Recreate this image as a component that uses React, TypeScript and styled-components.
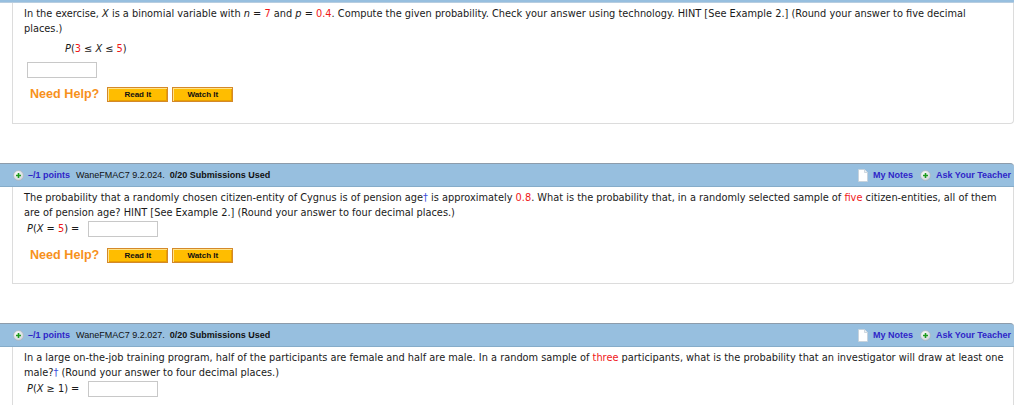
import React from 'react';
import styled, { createGlobalStyle } from 'styled-components';

const Global = createGlobalStyle`
  html, body { margin: 0; padding: 0; background: #ffffff; }
  body {
    width: 1024px; height: 405px; overflow: hidden;
    font-family: "DejaVu Sans", Verdana, sans-serif;
    color: #1a1a1a;
  }
`;

const Page = styled.div`
  width: 1014px;
  display: flex;
  flex-direction: column;
`;

const HeaderTail = styled.div`
  height: 2px;
  background: #97bfdf;
  border-bottom: 1px solid #b7cde0;
`;

const Question = styled.section<{ $first?: boolean }>`
  display: flex;
  flex-direction: column;
  margin-top: ${p => (p.$first ? '0' : '39px')};
`;

const Header = styled.div`
  height: 22px;
  border-top: 1px solid #8d9cab;
  border-bottom: 1px solid #86acc9;
  border-top-right-radius: 4px;
  background: #97bfdf;
  display: flex;
  align-items: center;
  padding: 0 3px 0 13px;
  font-family: "Liberation Sans", Arial, sans-serif;
  font-size: 9px;
  font-weight: bold;
  color: #111;
`;

const Points = styled.span`
  color: #2f25c8;
  margin: 0 6px 0 4px;
`;

const Code = styled.span`
  font-weight: normal;
  margin-right: 5px;
`;

const Spacer = styled.div`flex: 1;`;

const Link = styled.span<{ $gap: number }>`
  color: #2f25c8;
  margin-left: ${p => p.$gap}px;
`;

const LinkGroup = styled.div<{ $ml: number }>`
  display: flex;
  align-items: center;
  margin-left: ${p => p.$ml}px;
`;

const Body = styled.div<{ $bottom?: number }>`
  margin-left: 12px;
  border-left: 1px solid #dcdcdc;
  border-right: 1px solid #dcdcdc;
  border-bottom: 1px solid #dcdcdc;
  border-bottom-right-radius: 4px;
  padding: 3px 2px ${p => p.$bottom ?? 20}px 11px;
  font-size: 9.8px;
  line-height: 15px;
`;

const BodyOpen = styled.div`
  margin-left: 12px;
  border-left: 1px solid #dcdcdc;
  border-right: 1px solid #dcdcdc;
  padding: 3px 2px 20px 11px;
  font-size: 9.8px;
  line-height: 15px;
`;

const Para = styled.p`
  margin: 0;
`;

const Red = styled.span`color: #f01818;`;
const Dagger = styled.span`color: #3a4bdc;`;
const I = styled.i``;

const FormulaCentered = styled.div`
  margin: 5px 0 0 41px;
`;

const AnswerRow = styled.div<{ $top?: number }>`
  display: flex;
  align-items: center;
  gap: 4px;
  margin: ${p => p.$top ?? 0}px 0 0 3px;
  height: 17px;
`;

const Input = styled.div<{ $ml?: number }>`
  width: 68px;
  height: 14px;
  border: 1px solid #c8c8c8;
  background: #fff;
  margin-left: ${p => p.$ml ?? 0}px;
`;

const HelpRow = styled.div<{ $top: number }>`
  display: flex;
  align-items: center;
  gap: 4px;
  margin: ${p => p.$top}px 0 0 6px;
`;

const NeedHelp = styled.span`
  font-family: "Liberation Sans", Arial, sans-serif;
  font-weight: bold;
  font-size: 12.6px;
  color: #f7911c;
  margin-right: 4px;
`;

const HelpButton = styled.span`
  box-sizing: border-box;
  width: 61px;
  height: 15px;
  display: flex;
  align-items: center;
  justify-content: center;
  background: #ffbd00;
  border: 1px solid #d4892a;
  box-shadow: inset 1px 1px 0 #ffe38a, inset -1px -1px 0 #e8a000;
  font-family: "Liberation Sans", Arial, sans-serif;
  font-weight: bold;
  font-size: 8px;
  color: #111;
`;

const PlusIcon = () => (
  <svg width="11" height="11" viewBox="0 0 11 11">
    <defs>
      <radialGradient id="pg" cx="40%" cy="35%" r="70%">
        <stop offset="0" stopColor="#ffffff" />
        <stop offset="1" stopColor="#c9cfd6" />
      </radialGradient>
    </defs>
    <circle cx="5.5" cy="5.5" r="5" fill="url(#pg)" stroke="#a9b2bb" strokeWidth="0.6" />
    <path d="M5.5 3v5M3 5.5h5" stroke="#1c9b1c" strokeWidth="1.6" />
  </svg>
);

const NoteIcon = () => (
  <svg width="10" height="13" viewBox="0 0 10 13">
    <path d="M0.5 0.5h6l3 3v9h-9z" fill="#fff" stroke="#c5cfd8" strokeWidth="0.8" />
    <path d="M6.5 0.5v3h3" fill="#eef1f4" stroke="#c5cfd8" strokeWidth="0.8" />
  </svg>
);

const QHeader = ({ code }: { code: string }) => (
  <Header>
    <PlusIcon />
    <Points>–/1 points</Points>
    <Code>{code}</Code>
    <span>0/20 Submissions Used</span>
    <Spacer />
    <LinkGroup $ml={12}>
      <NoteIcon />
      <Link $gap={5}>My Notes</Link>
    </LinkGroup>
    <LinkGroup $ml={7}>
      <PlusIcon />
      <Link $gap={5}>Ask Your Teacher</Link>
    </LinkGroup>
  </Header>
);

const Help = ({ top }: { top: number }) => (
  <HelpRow $top={top}>
    <NeedHelp>Need Help?</NeedHelp>
    <HelpButton>Read It</HelpButton>
    <HelpButton>Watch It</HelpButton>
  </HelpRow>
);

export default function App() {
  return (
    <Page>
      <Global />
      <Question $first>
        <HeaderTail />
        <Body $bottom={21}>
          <Para>
            In the exercise, <I>X</I> is a binomial variable with <I>n</I> = <Red>7</Red> and <I>p</I> = <Red>0.4</Red>. Compute the given probability. Check your answer using technology. HINT [See Example 2.] (Round your answer to five decimal
            <br />places.)
          </Para>
          <FormulaCentered>
            <I>P</I>(<Red>3</Red> ≤ <I>X</I> ≤ <Red>5</Red>)
          </FormulaCentered>
          <AnswerRow $top={5}>
            <Input />
          </AnswerRow>
          <Help top={9} />
        </Body>
      </Question>

      <Question>
        <QHeader code="WaneFMAC7 9.2.024." />
        <Body $bottom={20}>
          <Para>
            The probability that a randomly chosen citizen-entity of Cygnus is of pension age<Dagger>†</Dagger> is approximately <Red>0.8</Red>. What is the probability that, in a randomly selected sample of <Red>five</Red> citizen-entities, all of them
            <br />are of pension age? HINT [See Example 2.] (Round your answer to four decimal places.)
          </Para>
          <AnswerRow $top={0}>
            <span>
              <I>P</I>(<I>X</I> = <Red>5</Red>) =
            </span>
            <Input $ml={5} />
          </AnswerRow>
          <Help top={11} />
        </Body>
      </Question>

      <Question>
        <QHeader code="WaneFMAC7 9.2.027." />
        <BodyOpen>
          <Para>
            In a large on-the-job training program, half of the participants are female and half are male. In a random sample of <Red>three</Red> participants, what is the probability that an investigator will draw at least one
            <br />male?<Dagger>†</Dagger> (Round your answer to four decimal places.)
          </Para>
          <AnswerRow $top={0}>
            <span>
              <I>P</I>(<I>X</I> ≥ 1) =
            </span>
            <Input $ml={5} />
          </AnswerRow>
        </BodyOpen>
      </Question>
    </Page>
  );
}
